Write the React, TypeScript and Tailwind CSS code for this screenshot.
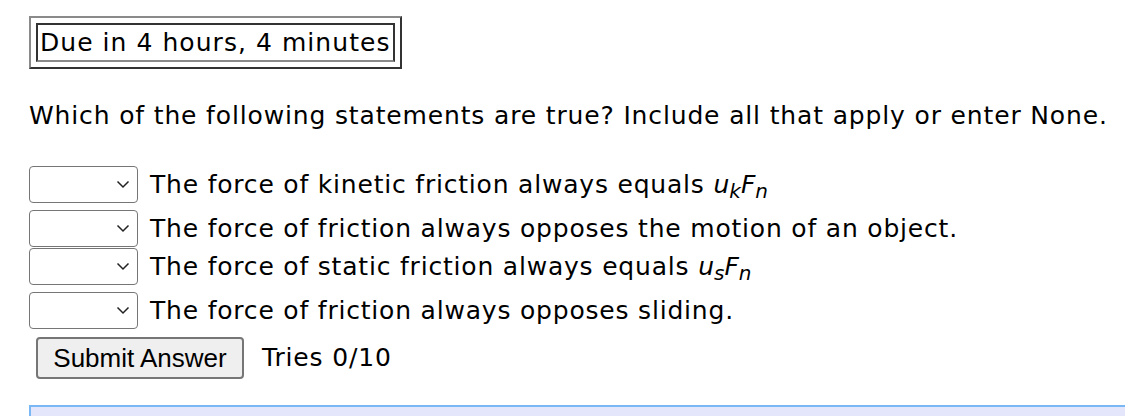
import React from "react";

const Sel = () => (
  <div className="w-[109px] h-[37px] shrink-0 border border-[#767676] rounded-[4px] bg-white flex items-center justify-end pr-[7px]">
    <svg width="14" height="9" viewBox="0 0 14 9" fill="none">
      <path d="M1.5 1.5 L7 7 L12.5 1.5" stroke="#222" strokeWidth="1.5" />
    </svg>
  </div>
);

const Sub = ({ c }: { c: string }) => (
  <span className="italic text-[20px] relative top-[5px] tracking-normal">{c}</span>
);

export default function App() {
  const font = { fontFamily: '"DejaVu Sans", Verdana, sans-serif' };
  return (
    <div className="w-[1125px] h-[416px] bg-white text-black overflow-hidden pl-[29px]" style={font}>
      <div className="pt-[16px]">
        <div className="inline-block border-2 border-t-[#8a8a8a] border-l-[#8a8a8a] border-b-[#333] border-r-[#333] p-[5px]">
          <div className="border-2 border-t-[#333] border-l-[#333] border-b-[#8a8a8a] border-r-[#333] px-[2px] h-[39px] flex items-center text-[25px] leading-none tracking-[1.05px]">
            Due in 4 hours, 4 minutes
          </div>
        </div>
      </div>
      <div className="mt-[31px] text-[25px] leading-[32px] tracking-[0.85px] whitespace-nowrap">
        Which of the following statements are true? Include all that apply or enter None.
      </div>
      <div className="mt-[34px] flex flex-col">
        <div className="flex items-start h-[44px]">
          <Sel />
          <div className="ml-[12px] text-[25px] leading-[37px] whitespace-nowrap tracking-[0.8px]">
            The force of kinetic friction always equals{" "}
            <i className="tracking-normal">u</i><Sub c="k" /><i className="tracking-normal">F</i><Sub c="n" />
          </div>
        </div>
        <div className="flex items-start h-[38px]">
          <Sel />
          <div className="ml-[12px] text-[25px] leading-[37px] whitespace-nowrap tracking-[0.8px]">
            The force of friction always opposes the motion of an object.
          </div>
        </div>
        <div className="flex items-start h-[44px]">
          <Sel />
          <div className="ml-[12px] text-[25px] leading-[37px] whitespace-nowrap tracking-[0.8px]">
            The force of static friction always equals{" "}
            <i className="tracking-normal">u</i><Sub c="s" /><i className="tracking-normal">F</i><Sub c="n" />
          </div>
        </div>
        <div className="flex items-start h-[45px]">
          <Sel />
          <div className="ml-[12px] text-[25px] leading-[37px] whitespace-nowrap tracking-[0.8px]">
            The force of friction always opposes sliding.
          </div>
        </div>
      </div>
      <div className="flex items-center">
        <div
          className="ml-[7px] w-[208px] h-[42px] border-2 border-[#767676] rounded-[4px] bg-[#efefef] flex items-center justify-center text-[26px]"
          style={{ fontFamily: '"Liberation Sans", Arial, sans-serif' }}
        >
          Submit Answer
        </div>
        <div className="ml-[18px] text-[25px] tracking-[0.85px]">Tries 0/10</div>
      </div>
      <div className="mt-[26px] h-[20px] border-t-2 border-l-2 border-[#7ab8f5] bg-[#e4e6fc]" />
    </div>
  );
}
